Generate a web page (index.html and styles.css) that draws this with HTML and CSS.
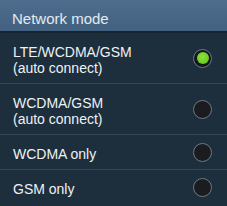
FILE: index.html
```html
<!DOCTYPE html>
<html>
<head>
	<meta charset="utf-8" />
	<title>Network mode</title>
	<link rel="stylesheet" href="styles.css">
</head>
<body>
	<header class="title-bar">Network mode</header>
	<ul class="options">
		<li class="option option--tall">
			<span class="option__label">LTE/WCDMA/GSM<br>(auto connect)</span>
			<span class="radio radio--on"></span>
		</li>
		<li class="option option--tall">
			<span class="option__label">WCDMA/GSM<br>(auto connect)</span>
			<span class="radio"></span>
		</li>
		<li class="option">
			<span class="option__label">WCDMA only</span>
			<span class="radio"></span>
		</li>
		<li class="option">
			<span class="option__label">GSM only</span>
			<span class="radio"></span>
		</li>
	</ul>
</body>
</html>
```

FILE: styles.css
```css
body {
	margin: 0;
	width: 227px;
	height: 206px;
	overflow: hidden;
	background: #1d2e3c;
	font: 14px/16px "Liberation Sans", Arial, sans-serif;
	color: #eef2f5;
}
.title-bar {
	height: 33px;
	box-sizing: border-box;
	padding: 10px 0 0 12px;
	font-size: 15px;
	line-height: 17px;
	background: linear-gradient(#4e6d8e, #42607f);
	border-bottom: 2px solid #17242f;
	color: #e2eaf1;
}
.options {
	list-style: none;
	margin: 0;
	padding: 0;
}
.option {
	display: flex;
	align-items: center;
	justify-content: space-between;
	height: 35px;
	box-sizing: border-box;
	padding: 0 15px 0 13px;
	border-bottom: 1px solid #33495b;
}
.option--tall {
	height: 51px;
}
.option:last-child {
	border-bottom: none;
}
.option__label {
	padding-top: 3px;
}
.radio {
	width: 17px;
	height: 17px;
	border-radius: 50%;
	background: #1a1c1f;
	border: 1.5px solid #6d7a85;
	display: flex;
	align-items: center;
	justify-content: center;
}
.radio--on {
	background: #14181b;
}
.radio--on::after {
	content: "";
	width: 12px;
	height: 12px;
	border-radius: 50%;
	background: radial-gradient(circle at 45% 40%, #8ee23a, #5cbf1c);
}
```
